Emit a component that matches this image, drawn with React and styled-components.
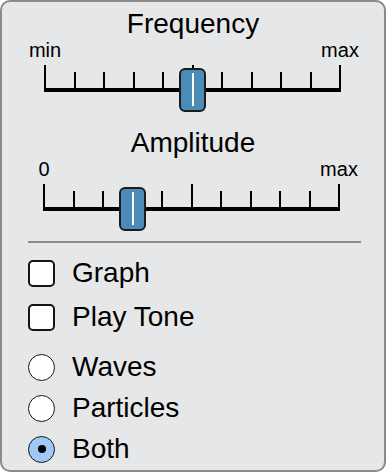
import React, { useState } from 'react';
import styled, { createGlobalStyle } from 'styled-components';

const GlobalStyle = createGlobalStyle`
    html, body {
        margin: 0;
        padding: 0;
        background: #ffffff;
    }
`

const Panel = styled.div`
    box-sizing: border-box;
    width: 386px;
    height: 472px;
    border: 2px solid #8a8a8a;
    border-radius: 10px;
    background: #e6e7e8;
    padding-top: 7px;
    display: flex;
    flex-direction: column;
    font-family: "Liberation Sans", Arial, sans-serif;
    color: #000;
`

const SliderSection = styled.section`
    display: flex;
    flex-direction: column;
    margin-top: ${p => p.$top || 0}px;
`

const Title = styled.div`
    font-size: 28px;
    line-height: 30px;
    text-align: center;
`

const Slider = styled.div`
    width: 297px;
    margin-left: ${p => p.$left}px;
`

const EndLabels = styled.div`
    display: flex;
    justify-content: space-between;
    margin: 0 -19px;
    font-size: 20px;
    line-height: 22px;
`

const EndLabel = styled.span`
    width: 40px;
    text-align: center;
`

const Scale = styled.div`
    position: relative;
    box-sizing: border-box;
    height: 31px;
    padding-top: 4px;
    border-bottom: 4px solid #000;
    display: flex;
    justify-content: space-between;
    align-items: flex-end;
`

const Tick = styled.span`
    width: 2px;
    height: ${p => p.$major ? 23 : 16}px;
    background: #000;
`

const Thumb = styled.div`
    position: absolute;
    top: 7px;
    box-sizing: border-box;
    width: 27px;
    height: 44px;
    border: 2px solid #1c1c1c;
    border-radius: 6px;
    background: #4b8bb7;
    display: flex;
    justify-content: center;
    padding: 3px 0 4px;
`

const Grip = styled.span`
    width: 2px;
    background: #ffffff;
`

const Separator = styled.div`
    width: 333px;
    height: 2px;
    margin: 30px 0 0 26px;
    background: #8c8c8c;
`

const Group = styled.div`
    display: flex;
    flex-direction: column;
    gap: ${p => p.$gap}px;
    margin-top: ${p => p.$top}px;
    padding-left: 26px;
`

const Option = styled.label`
    display: flex;
    align-items: center;
    gap: 17px;
    height: 40px;
    font-size: 28px;
    cursor: pointer;
`

const Box = styled.span`
    box-sizing: border-box;
    width: 27px;
    height: 27px;
    border: 2px solid #151515;
    border-radius: 5px;
    background: #ffffff;
`

const Radio = styled.span`
    box-sizing: border-box;
    width: 27px;
    height: 27px;
    border: 1.5px solid #151515;
    border-radius: 50%;
    background: ${p => p.$checked ? '#9fc8f4' : '#ffffff'};
    display: flex;
    align-items: center;
    justify-content: center;
    &::after {
        content: '';
        display: ${p => p.$checked ? 'block' : 'none'};
        width: 8px;
        height: 8px;
        border-radius: 50%;
        background: #000;
    }
`

const TRACK = 295;

const SliderControl = ({ title, min, max, value, left, top }) => (
    <SliderSection $top={top}>
        <Title>{title}</Title>
        <Slider $left={left}>
            <EndLabels>
                <EndLabel>{min}</EndLabel>
                <EndLabel>{max}</EndLabel>
            </EndLabels>
            <Scale>
                {Array.from({ length: 11 }).map((_, i) => (
                    <Tick key={i} $major={i % 5 === 0} />
                ))}
                <Thumb style={{ left: 1 + value * TRACK - 13.5 }}>
                    <Grip />
                </Thumb>
            </Scale>
        </Slider>
    </SliderSection>
)

export default function App() {
    const [graph, setGraph] = useState(false);
    const [tone, setTone] = useState(false);
    const [view, setView] = useState('Both');

    return (
        <>
            <GlobalStyle />
            <Panel>
                <SliderControl title="Frequency" min="min" max="max" value={0.5} left={42} />
                <SliderControl title="Amplitude" min="0" max="max" value={0.3} left={41} top={36} />
                <Separator />
                <Group $gap={4} $top={10}>
                    <Option onClick={() => setGraph(g => !g)}>
                        <Box />
                        Graph
                    </Option>
                    <Option onClick={() => setTone(t => !t)}>
                        <Box />
                        Play Tone
                    </Option>
                </Group>
                <Group $gap={1} $top={10}>
                    {['Waves', 'Particles', 'Both'].map(name => (
                        <Option key={name} onClick={() => setView(name)}>
                            <Radio $checked={view === name} />
                            {name}
                        </Option>
                    ))}
                </Group>
            </Panel>
        </>
    )
}
